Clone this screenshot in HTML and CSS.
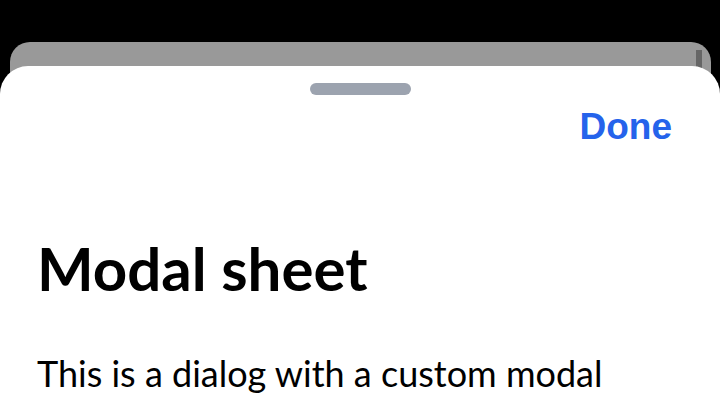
FILE: index.html
```html
<!DOCTYPE html>
<html lang="en">
<head>
    <meta charset="UTF-8">
    <meta name="viewport" content="width=device-width, initial-scale=1.0">
    <title>Modal sheet</title>
    <link rel="stylesheet" href="styles.css">
</head>
<body>
    <div class="screen">
        <!-- page underneath, pushed back behind the sheet -->
        <div class="backdrop-page">
            <span class="scrollbar"></span>
        </div>

        <div class="sheet" role="dialog" aria-labelledby="sheetTitle">
            <div class="grabber"></div>
            <div class="sheet-bar">
                <button class="done">Done</button>
            </div>
            <h1 id="sheetTitle">Modal sheet</h1>
            <p class="sheet-body">This is a dialog with a custom modal</p>
        </div>
    </div>
</body>
</html>
```

FILE: styles.css
```css
html, body {
    margin: 0;
    padding: 0;
    height: 100%;
}

body {
    background-color: #000;
    overflow: hidden;
}

.screen {
    display: flex;
    flex-direction: column;
    padding-top: 42px;
    height: 100%;
    box-sizing: border-box;
}

.backdrop-page {
    position: relative;
    flex-shrink: 0;
    margin: 0 9px 0 10px;
    height: 40px;
    background-color: #999;
    border-radius: 20px 20px 0 0;
}

.scrollbar {
    position: absolute;
    top: 8px;
    right: 9px;
    width: 6px;
    height: 40px;
    background-color: #666;
}

.sheet {
    position: relative;
    flex: 1;
    margin-top: -16px;
    background-color: #fff;
    border-radius: 28px 28px 0 0;
    padding: 17px 37px 0;
    overflow: hidden;
}

.grabber {
    width: 101px;
    height: 12px;
    margin: 0 auto;
    background-color: #9ca3af;
    border-radius: 6px;
}

.sheet-bar {
    display: flex;
    justify-content: flex-end;
    margin-top: 13px;
    margin-right: 11px;
}

.done {
    border: none;
    background: none;
    padding: 0;
    color: #2563eb;
    font-family: "Liberation Sans", Arial, sans-serif;
    font-weight: bold;
    font-size: 37px;
    line-height: 1;
    cursor: pointer;
}

h1 {
    margin: 93px 0 0;
    font-family: Lato, "Open Sans", sans-serif;
    font-weight: bold;
    font-size: 60px;
    line-height: 1;
    color: #000;
}

.sheet-body {
    margin: 57px 0 0;
    font-family: Lato, "Open Sans", sans-serif;
    font-size: 36px;
    line-height: 1;
    color: #000;
}
```
